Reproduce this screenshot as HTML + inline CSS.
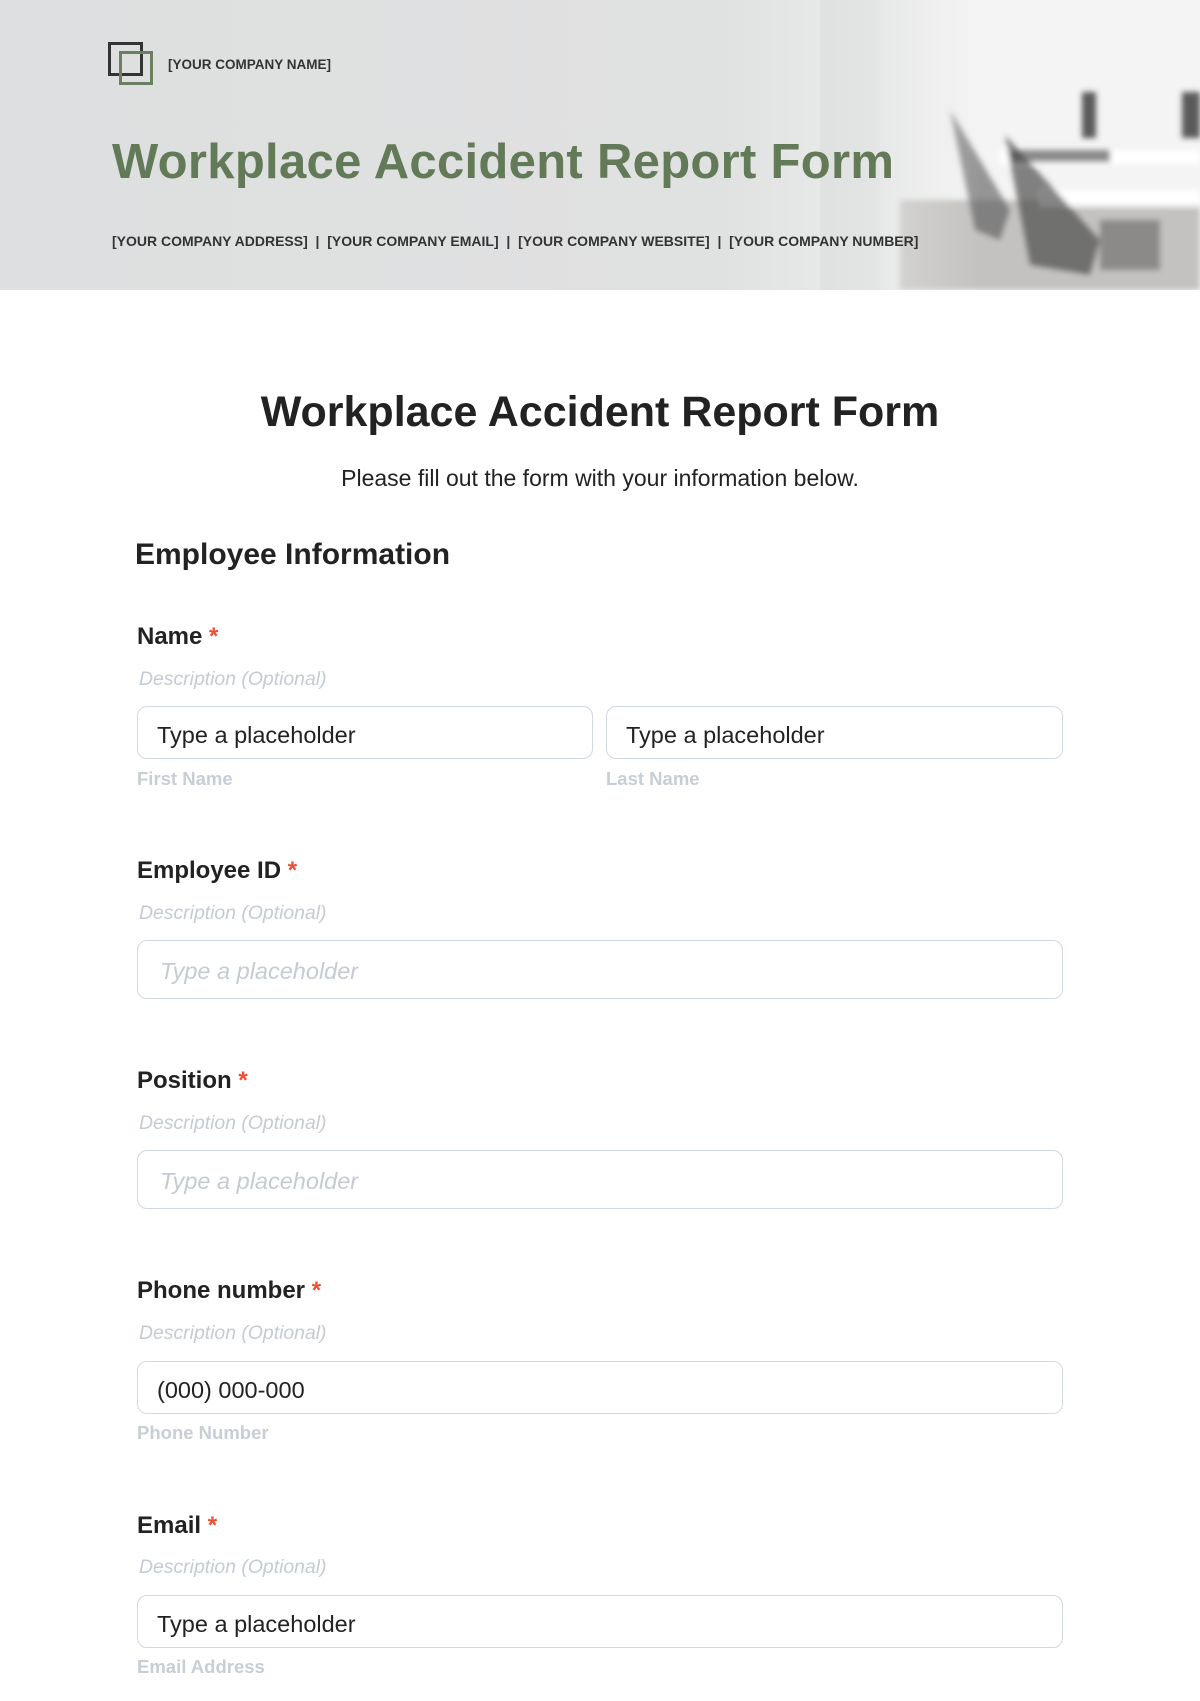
<!DOCTYPE html>
<html><head><meta charset="utf-8"><style>
*{margin:0;padding:0;box-sizing:border-box}
body{width:1200px;height:1701px;background:#fff;font-family:"Liberation Sans",sans-serif;position:relative;overflow:hidden;color:#222}
.a{position:absolute;white-space:nowrap}
.hdr{position:absolute;left:0;top:0;width:1200px;height:290px;background:linear-gradient(90deg,#dedfe0 0%,#e0e1e1 60%,#eceded 75%,#f3f3f3 100%);overflow:hidden}
.lbl{font-size:24px;font-weight:bold;color:#222}
.lbl span{color:#f04e30}
.desc{font-size:19.4px;font-style:italic;color:#c5cbd3}
.inp{position:absolute;border:1.5px solid #d2d8e0;border-radius:10px;background:#fff}
.inp div{position:absolute;left:19px;font-size:23.5px;white-space:nowrap}
.ph{color:#c5cbd3;font-style:italic}
.help{font-size:18.5px;color:#c8ced6;font-weight:bold}
</style></head><body>
<div class="hdr">
<svg width="1200" height="290" style="position:absolute;left:0;top:0">
<defs><linearGradient id="fd" x1="0" x2="1"><stop offset="0" stop-color="#e0e1e1" stop-opacity="1"/><stop offset="1" stop-color="#e0e1e1" stop-opacity="0"/></linearGradient>
<filter id="b"><feGaussianBlur stdDeviation="3"/></filter></defs>
<rect x="880" y="0" width="320" height="290" fill="#f4f4f4"/>
<g filter="url(#b)">
<rect x="900" y="200" width="300" height="90" fill="#8a8480" opacity=".45"/>
<rect x="1000" y="150" width="200" height="14" fill="#fff"/>
<rect x="1040" y="190" width="160" height="16" fill="#fff"/>
<rect x="1010" y="150" width="100" height="12" fill="#3a3a3a" opacity=".6"/>
<rect x="1082" y="92" width="14" height="46" fill="#333" opacity=".8"/>
<rect x="1182" y="92" width="18" height="46" fill="#333" opacity=".8"/>
<path d="M950 110 L975 230 L1000 240 L1010 210 Z" fill="#555" opacity=".6"/>
<path d="M1005 135 L1030 265 L1090 275 L1100 240 Z" fill="#444" opacity=".65"/>
<rect x="1100" y="220" width="60" height="50" fill="#444" opacity=".45"/>
</g>
<rect x="820" y="0" width="160" height="290" fill="url(#fd)"/>
</svg>
<div class="a" style="left:108px;top:42px;width:35px;height:34px;border:3.5px solid #333"></div>
<div class="a" style="left:119px;top:51px;width:34px;height:34px;border:3.5px solid #6b8060"></div>
<div class="a" style="left:168px;top:57px;font-size:13.5px;font-weight:bold;color:#333">[YOUR COMPANY NAME]</div>
<div class="a" style="left:112px;top:134px;font-size:49px;font-weight:bold;color:#627a57;letter-spacing:.3px">Workplace Accident Report Form</div>
<div class="a" style="left:112px;top:233px;font-size:14px;font-weight:bold;color:#333">[YOUR COMPANY ADDRESS] &nbsp;| &nbsp;[YOUR COMPANY EMAIL] &nbsp;| &nbsp;[YOUR COMPANY WEBSITE] &nbsp;| &nbsp;[YOUR COMPANY NUMBER]</div>
</div>

<div class="a" style="left:0;width:1200px;text-align:center;top:388px;font-size:43px;font-weight:bold;color:#222">Workplace Accident Report Form</div>
<div class="a" style="left:0;width:1200px;text-align:center;top:465px;font-size:23px;color:#222">Please fill out the form with your information below.</div>
<div class="a" style="left:135px;top:538px;font-size:30px;font-weight:bold;color:#222">Employee Information</div>

<div class="a lbl" style="left:137px;top:623px">Name <span>*</span></div>
<div class="a desc" style="left:139px;top:668px">Description (Optional)</div>
<div class="inp" style="left:137px;top:706px;width:456px;height:53px"><div style="top:15px">Type a placeholder</div></div>
<div class="inp" style="left:606px;top:706px;width:457px;height:53px"><div style="top:15px">Type a placeholder</div></div>
<div class="a help" style="left:137px;top:768px">First Name</div>
<div class="a help" style="left:606px;top:768px">Last Name</div>

<div class="a lbl" style="left:137px;top:857px">Employee ID <span>*</span></div>
<div class="a desc" style="left:139px;top:902px">Description (Optional)</div>
<div class="inp" style="left:137px;top:940px;width:926px;height:59px"><div class="ph" style="top:17px;left:22px">Type a placeholder</div></div>

<div class="a lbl" style="left:137px;top:1067px">Position <span>*</span></div>
<div class="a desc" style="left:139px;top:1112px">Description (Optional)</div>
<div class="inp" style="left:137px;top:1150px;width:926px;height:59px"><div class="ph" style="top:17px;left:22px">Type a placeholder</div></div>

<div class="a lbl" style="left:137px;top:1277px">Phone number <span>*</span></div>
<div class="a desc" style="left:139px;top:1322px">Description (Optional)</div>
<div class="inp" style="left:137px;top:1361px;width:926px;height:53px"><div style="top:15px">(000) 000-000</div></div>
<div class="a help" style="left:137px;top:1422px">Phone Number</div>

<div class="a lbl" style="left:137px;top:1512px">Email <span>*</span></div>
<div class="a desc" style="left:139px;top:1556px">Description (Optional)</div>
<div class="inp" style="left:137px;top:1595px;width:926px;height:53px"><div style="top:15px">Type a placeholder</div></div>
<div class="a help" style="left:137px;top:1656px">Email Address</div>
</body></html>
